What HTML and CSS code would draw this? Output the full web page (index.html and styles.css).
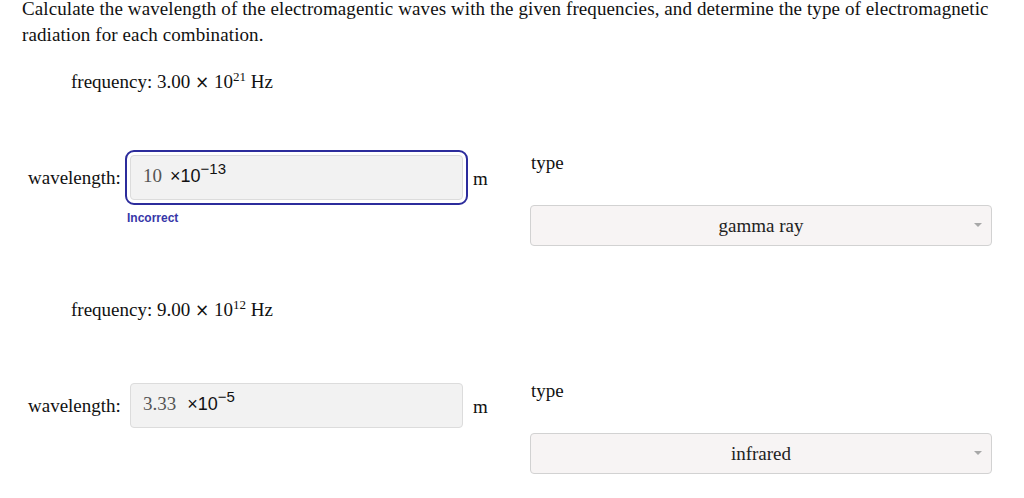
FILE: index.html
```
<!DOCTYPE html>
<html>

<head>
    <link rel="stylesheet" href="styles.css">
</head>

<body>
    <div class="page">
        <p class="question">Calculate the wavelength of the electromagentic waves with the given frequencies, and determine the type of electromagnetic radiation for each combination.</p>

        <div class="part">
            <p class="freq">frequency: 3.00 <span class="times">&times;</span> 10<sup>21</sup> Hz</p>
            <div class="answer">
                <div class="wave">
                    <div class="wave-row">
                        <span class="label">wavelength:</span>
                        <div class="entry focused">
                            <span class="num">10</span>
                            <span class="pow">&times;10<sup>&minus;13</sup></span>
                        </div>
                        <span class="unit">m</span>
                    </div>
                    <div class="feedback">Incorrect</div>
                </div>
                <div class="type">
                    <div class="type-label">type</div>
                    <div class="select">gamma ray<span class="arrow"></span></div>
                </div>
            </div>
        </div>

        <div class="part">
            <p class="freq">frequency: 9.00 <span class="times">&times;</span> 10<sup>12</sup> Hz</p>
            <div class="answer">
                <div class="wave">
                    <div class="wave-row">
                        <span class="label">wavelength:</span>
                        <div class="entry">
                            <span class="num">3.33</span>
                            <span class="pow wide">&times;10<sup>&minus;5</sup></span>
                        </div>
                        <span class="unit">m</span>
                    </div>
                </div>
                <div class="type">
                    <div class="type-label">type</div>
                    <div class="select">infrared<span class="arrow"></span></div>
                </div>
            </div>
        </div>
    </div>
</body>

</html>
```

FILE: styles.css
```
* {
    padding: 0;
    margin: 0;
    box-sizing: border-box;
}

body {
    background: #fff;
    color: #111;
    font-family: "Liberation Serif", "Times New Roman", serif;
    font-size: 19px;
    line-height: 26px;
}

.page {
    padding: 0 22px;
}

.question {
    margin-top: -4px;
    letter-spacing: 0.1px;
}

.part {
    margin-top: 21px;
}

.part + .part {
    margin-top: 51px;
}

.freq {
    margin-left: 49px;
}

.times {
    font-family: "DejaVu Sans", sans-serif;
    font-size: 17px;
}

.freq sup {
    font-size: 13px;
    line-height: 0;
    vertical-align: 7px;
}

.answer {
    display: flex;
    align-items: flex-start;
    margin-top: 55px;
    margin-left: 6px;
}

.wave {
    width: 502px;
    padding-top: 5px;
}

.wave-row {
    display: flex;
    align-items: center;
}

.label {
    width: 102px;
}

.entry {
    width: 333px;
    height: 45px;
    background: #f2f2f2;
    border: 1px solid #dcdcdc;
    border-radius: 4px;
    padding: 7px 0 0 12px;
    display: flex;
    align-items: baseline;
}

.focused {
    outline: 2px solid #2c2c9c;
    outline-offset: 3px;
}

.num {
    color: #555;
}

.pow {
    margin-left: 8px;
    font-family: "Liberation Sans", Arial, sans-serif;
    font-size: 18px;
    color: #111;
}

.pow.wide {
    margin-left: 11px;
}

.pow sup {
    font-size: 15px;
    line-height: 0;
    vertical-align: 8px;
}

.unit {
    margin-left: 10px;
    padding-top: 3px;
}

.feedback {
    margin-left: 99px;
    margin-top: 10px;
    font-family: "Liberation Sans", Arial, sans-serif;
    font-size: 12px;
    font-weight: bold;
    line-height: 16px;
    color: #3636a8;
}

.type {
    width: 462px;
    padding-left: 1px;
}

.type-label {
    margin-bottom: 29px;
}

.select {
    position: relative;
    height: 41px;
    margin-left: -1px;
    background: #f7f4f4;
    border: 1px solid #d2d2d2;
    border-radius: 4px;
    text-align: center;
    line-height: 39px;
    color: #222;
}

.arrow {
    position: absolute;
    right: 9px;
    top: 17px;
    width: 0;
    height: 0;
    border-left: 4px solid transparent;
    border-right: 4px solid transparent;
    border-top: 4px solid #a8a8a8;
}
```
